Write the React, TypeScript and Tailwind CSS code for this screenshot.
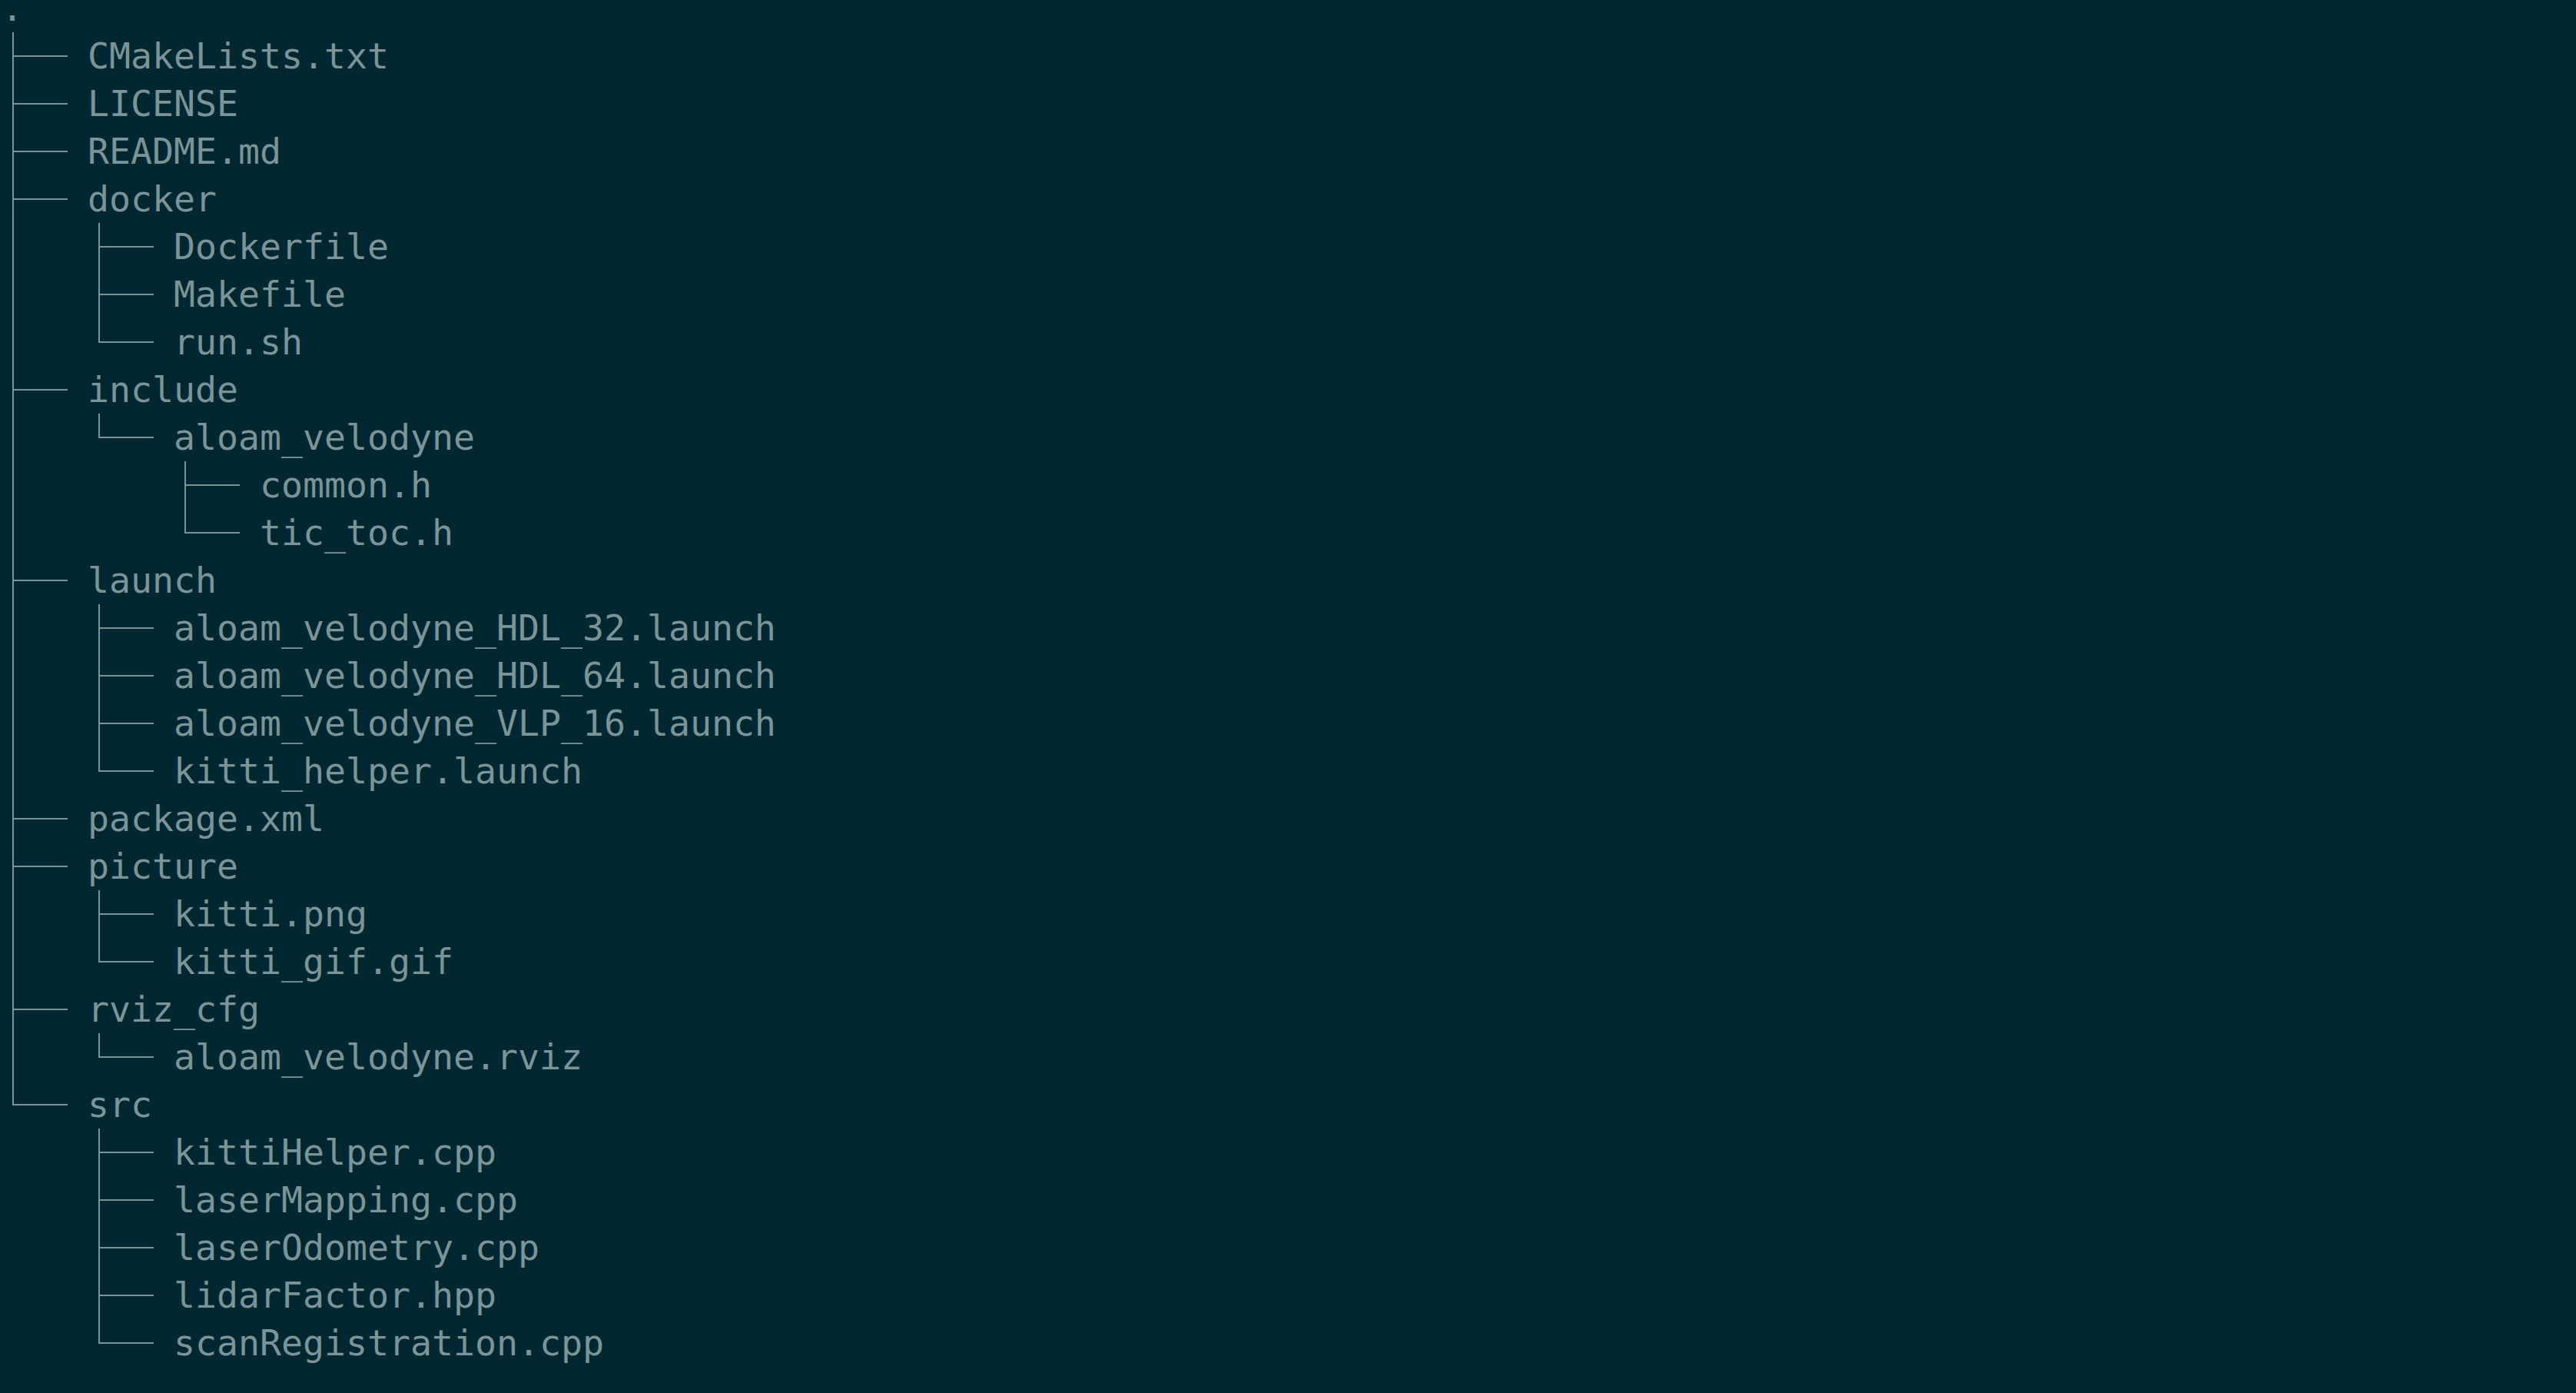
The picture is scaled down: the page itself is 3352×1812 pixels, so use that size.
type Node = { name: string; children?: Node[] };

const tree: Node[] = [
  { name: "CMakeLists.txt" },
  { name: "LICENSE" },
  { name: "README.md" },
  {
    name: "docker",
    children: [{ name: "Dockerfile" }, { name: "Makefile" }, { name: "run.sh" }],
  },
  {
    name: "include",
    children: [
      { name: "aloam_velodyne", children: [{ name: "common.h" }, { name: "tic_toc.h" }] },
    ],
  },
  {
    name: "launch",
    children: [
      { name: "aloam_velodyne_HDL_32.launch" },
      { name: "aloam_velodyne_HDL_64.launch" },
      { name: "aloam_velodyne_VLP_16.launch" },
      { name: "kitti_helper.launch" },
    ],
  },
  { name: "package.xml" },
  { name: "picture", children: [{ name: "kitti.png" }, { name: "kitti_gif.gif" }] },
  { name: "rviz_cfg", children: [{ name: "aloam_velodyne.rviz" }] },
  {
    name: "src",
    children: [
      { name: "kittiHelper.cpp" },
      { name: "laserMapping.cpp" },
      { name: "laserOdometry.cpp" },
      { name: "lidarFactor.hpp" },
      { name: "scanRegistration.cpp" },
    ],
  },
];

type Seg = "pipe" | "blank" | "tee" | "elbow";
type Row = { segs: Seg[]; name: string };

const flatten = (nodes: Node[], prefix: Seg[], out: Row[]) => {
  nodes.forEach((n, i) => {
    const last = i === nodes.length - 1;
    out.push({ segs: [...prefix, last ? "elbow" : "tee"], name: n.name });
    if (n.children) flatten(n.children, [...prefix, last ? "blank" : "pipe"], out);
  });
  return out;
};

const rows = flatten(tree, [], []);

const Segment = ({ kind }: { kind: Seg }) => {
  if (kind === "blank") return <div className="w-[112px] h-[62px] shrink-0" />;
  if (kind === "pipe")
    return (
      <div className="w-[112px] h-[62px] shrink-0 pl-[14px]">
        <div className="h-full w-0 border-l-2 border-[#7a9497]" />
      </div>
    );
  if (kind === "elbow")
    return (
      <div className="w-[112px] h-[62px] shrink-0 pl-[14px]">
        <div className="h-[32px] w-[72px] border-l-2 border-b-2 border-[#7a9497]" />
      </div>
    );
  return (
    <div className="w-[112px] h-[62px] shrink-0 pl-[14px]">
      <div className="h-full w-[72px] border-l-2 border-[#7a9497]">
        <div className="h-[32px] border-b-2 border-[#7a9497]" />
      </div>
    </div>
  );
};

export default function App() {
  return (
    <div className="min-h-screen w-full overflow-hidden bg-[#012731]">
      <div
        className="-mt-[20px] pl-[2px] text-[46.5px] leading-[62px] text-[#7a9497] whitespace-pre"
        style={{ fontFamily: '"DejaVu Sans Mono", "Liberation Mono", monospace' }}
      >
        <div className="h-[62px]">.</div>
        {rows.map((r, i) => (
          <div key={i} className="flex h-[62px] items-start">
            {r.segs.map((s, j) => (
              <Segment key={j} kind={s} />
            ))}
            <span>{r.name}</span>
          </div>
        ))}
      </div>
    </div>
  );
}
